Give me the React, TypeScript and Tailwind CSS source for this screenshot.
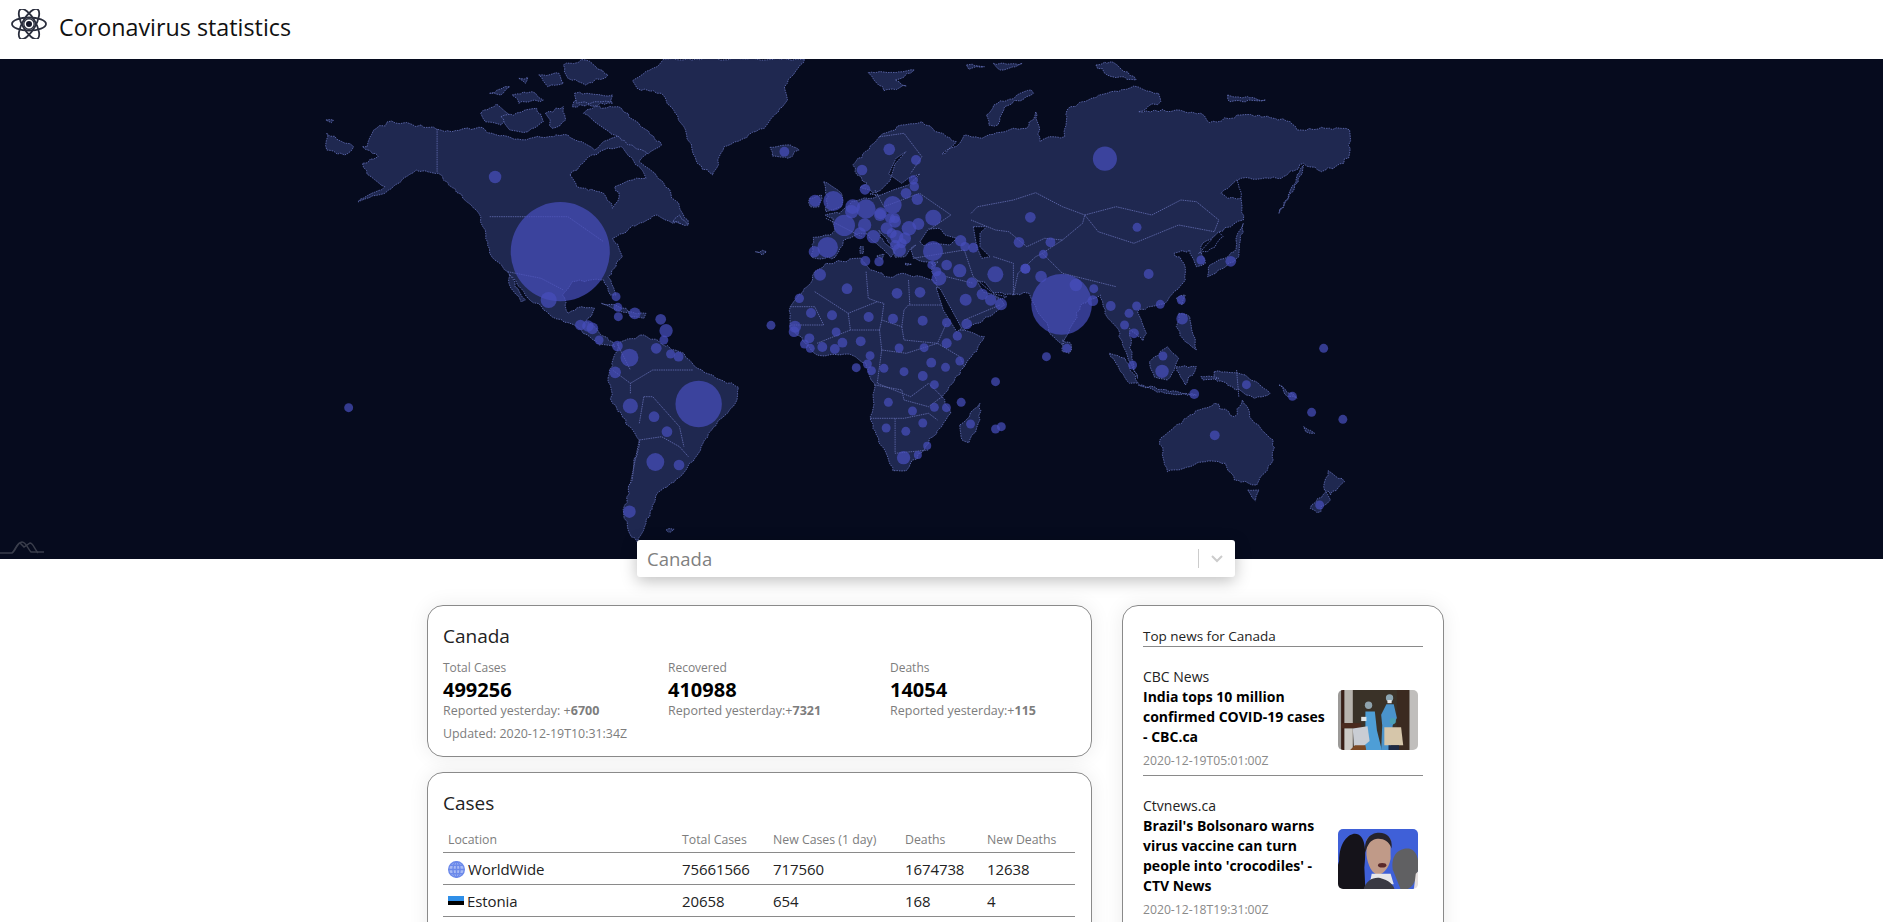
import React from 'react';

type Pt = [number, number];

// map shapes are noted in the crops they were read from, each with its own origin and scale
const west = (p: Pt): Pt => [300 + p[0] / 2.24, 50 + p[1] / 3];
const east = (p: Pt): Pt => [750 + p[0] / 2.24, 50 + p[1] / 3];
const mid = (p: Pt): Pt => [780 + p[0] / 3, 150 + p[1] / 3];
const str = (pts: Pt[]) => pts.map((p) => p[0].toFixed(1) + ',' + p[1].toFixed(1)).join(' ');

// breaks long straight edges up so coasts read as coasts
const rough = (pts: Pt[]): Pt[] => {
  const out: Pt[] = [];
  pts.forEach((a, i) => {
    const b = pts[(i + 1) % pts.length];
    const len = Math.hypot(b[0] - a[0], b[1] - a[1]);
    const steps = Math.max(1, Math.round(len / 4));
    for (let s = 0; s < steps; s++) {
      const t = s / steps;
      const n1 = Math.sin((a[0] + s) * 12.9898 + (a[1] + s) * 78.233) * 43758.5453;
      const n2 = Math.sin((a[0] + s) * 39.346 + (a[1] - s) * 11.135) * 24634.6345;
      const jx = s === 0 ? 0 : (n1 - Math.floor(n1) - 0.5) * 2.8;
      const jy = s === 0 ? 0 : (n2 - Math.floor(n2) - 0.5) * 2.8;
      out.push([a[0] + (b[0] - a[0]) * t + jx, a[1] + (b[1] - a[1]) * t + jy]);
    }
  });
  return out;
};

const westLand: Pt[][] = [
  // north america
  [[150,290],[165,240],[205,213],[305,237],[340,245],[400,232],[430,250],[480,268],[540,262],[600,255],[640,282],[660,300],[690,270],[730,255],[790,295],[760,335],[790,365],[815,400],[850,470],[870,522],[835,520],[800,495],[760,520],[700,565],[722,620],[690,680],[708,735],[695,735],[680,690],[610,695],[588,735],[600,790],[630,770],[660,775],[640,815],[700,875],[705,890],[670,885],[620,830],[560,795],[505,735],[465,665],[425,610],[415,540],[395,480],[365,445],[310,370],[260,360],[190,430],[130,456],[190,410],[150,372],[140,340],[175,320],[140,290]],
  // south america
  [[690,985],[712,880],[770,855],[850,905],[890,955],[982,1012],[975,1060],[915,1150],[890,1215],[850,1282],[800,1330],[772,1430],[755,1475],[735,1440],[725,1390],[740,1300],[760,1170],[700,1060]],
  // greenland
  [[745,92],[800,50],[815,27],[1130,27],[1085,110],[1092,150],[1040,235],[950,290],[925,375],[890,340],[860,230],[810,130],[755,115]],
  // arctic islands
  [[635,190],[660,170],[720,175],[810,285],[780,312],[720,270],[660,215]],
  [[405,190],[440,162],[470,195],[450,225],[415,215]],
  [[450,200],[530,175],[545,215],[510,245],[470,240]],
  [[550,190],[590,170],[595,210],[565,235]],
  [[610,170],[700,160],[695,150],[620,135]],
  [[425,130],[470,110],[450,135]],
  [[475,135],[520,125],[545,150],[490,160]],
  [[535,75],[580,70],[590,100],[555,110]],
  [[590,45],[640,30],[690,75],[640,105],[600,85]],
  [[615,130],[700,135],[695,155],[620,160]],
  [[490,85],[510,82],[505,100]],
  [[60,250],[120,290],[100,315],[60,300]],
  [[58,210],[75,210],[70,218]],
  // baja
  [[470,675],[505,750],[495,755],[468,700]],
  // caribbean
  [[675,760],[730,775],[745,790],[700,775]],
  [[735,785],[775,790],[770,805],[740,800]],
  [[835,515],[870,525],[850,495]],
  [[1020,605],[1045,605],[1035,615]],
  [[820,1440],[838,1438],[825,1446]],
];

const europeCoast: Pt[] = [
  [470,395],[455,365],[458,340],[430,335],[400,322],[392,300],[408,285],[375,320],[345,322],[335,285],[305,252],[296,240],[300,262],[322,285],[346,302],[332,322],[300,290],[262,252],[235,250],[190,272],[165,322],[120,327],[95,322],[100,262],[150,255],[165,240],[160,205],[135,195],[180,190],[215,155],[290,140],[270,120],[240,112],[262,100],
];
const midToEast = (p: Pt): Pt => [67.2 + 0.7467 * p[0], 300 + p[1]];

const eastLand: Pt[][] = [
  // eurasia, seas cut out below
  [[290,260],[340,225],[385,215],[440,260],[462,275],[430,312],[470,280],[480,255],[520,265],[580,240],[620,235],[640,185],[650,275],[670,260],[705,260],[710,180],[745,155],[800,130],[860,108],[915,130],[920,155],[870,185],[960,180],[1010,190],[1030,218],[1100,195],[1140,195],[1210,215],[1225,240],[1280,232],[1343,240],[1343,310],[1330,340],[1280,365],[1240,340],[1190,385],[1100,385],[1060,430],[1100,445],[1105,510],[1050,545],[1010,590],[1020,640],[1000,650],[985,600],[950,610],[972,640],[975,690],[930,760],[890,772],[868,785],[888,850],[880,872],[850,835],[855,925],[868,985],[845,915],[820,830],[795,790],[785,735],[745,760],[700,885],[680,860],[635,760],[625,730],[590,735],[565,728],[540,725],[570,765],[535,800],[475,845],[440,780],[415,700],
    ...europeCoast.map(midToEast),
    [240,375],[230,345]],
  // africa
  [[145,665],[170,640],[250,625],[270,660],[320,682],[340,670],[410,690],[470,840],[525,860],[480,950],[430,1040],[450,1090],[410,1160],[350,1262],[320,1262],[270,1110],[280,1010],[260,940],[220,912],[150,915],[90,830],[90,770],[140,690]],
  // australia, tasmania, nz
  [[918,1170],[985,1095],[1040,1060],[1085,1100],[1103,1050],[1125,1110],[1172,1170],[1172,1230],[1135,1305],[1085,1290],[1065,1240],[1020,1235],[935,1265]],
  [[1115,1320],[1140,1320],[1132,1352]],
  [[1295,1262],[1332,1295],[1300,1335],[1285,1310]],
  [[1290,1325],[1300,1350],[1270,1388],[1255,1375]],
  // islands
  [[45,292],[80,285],[110,300],[85,325],[50,318]],
  [[165,395],[205,430],[205,470],[170,485],[175,440]],
  [[133,445],[160,435],[155,470],[135,470]],
  [[265,68],[368,60],[325,90],[350,108],[300,122]],
  [[485,45],[525,50],[490,58]],
  [[545,40],[610,40],[560,60]],
  [[530,195],[555,160],[630,120],[635,130],[570,170],[555,225],[535,225]],
  [[775,45],[810,35],[865,90],[800,75]],
  [[1070,135],[1155,150],[1110,155],[1075,155]],
  [[1185,490],[1240,345],[1235,375],[1195,470]],
  [[1090,560],[1105,520],[1095,620],[1060,655],[1025,680],[1030,645],[1085,605]],
  [[470,1125],[515,1060],[515,1110],[490,1178],[475,1170]],
  [[700,870],[720,885],[715,910],[700,905]],
  [[805,910],[840,925],[870,1000],[850,1000]],
  [[895,935],[935,890],[960,925],[935,990],[905,980]],
  [[870,1005],[940,1025],[1000,1035],[930,1030]],
  [[955,950],[1000,950],[975,1005]],
  [[1040,965],[1110,975],[1165,1030],[1130,1045],[1080,1010],[1040,985]],
  [[960,790],[985,800],[1000,900],[975,875],[955,830]],
  [[1185,1005],[1225,1045],[1205,1040]],
  [[1240,1130],[1265,1150],[1245,1145]],
  [[955,745],[975,735],[968,765]],
  [[1010,980],[1050,985],[1015,990]],
];

// painted over the land polygons
const midSeas: Pt[][] = [
  [[270,132],[300,122],[330,92],[345,42],[378,5],[348,25],[326,72],[365,100],[385,85],[420,72],[385,105],[345,118],[300,136]],
  [[420,275],[445,237],[480,235],[495,255],[530,265],[510,285],[460,280],[430,287]],
  [[580,230],[620,230],[600,250],[600,290],[630,320],[605,325],[590,290]],
  [[590,392],[615,397],[642,432],[680,440],[665,447],[635,432],[610,426]],
  [[468,412],[480,415],[545,535],[530,545],[490,480]],
];
const midIslands: Pt[][] = [
  [[240,290],[250,290],[250,310],[240,310]],
  [[290,318],[312,312],[306,328]],
  [[455,340],[475,335],[462,348]],
  [[375,340],[395,343],[378,346]],
];

const eastSeas: Pt[][] = [
  [[1055,430],[1090,390],[1100,445],[1070,445]],
  [[1005,610],[1050,545],[1060,560],[1025,605]],
];

const westLines: Pt[][] = [
  [[307,237],[307,365]],
  [[425,500],[600,500],[680,575]],
  [[465,665],[540,685],[590,720]],
  [[740,1000],[790,960],[880,960]],
  [[740,1030],[740,1000],[700,960]],
  [[770,1040],[790,1040],[850,1130],[860,1190]],
  [[760,1120],[770,1040]],
  [[760,1170],[810,1160],[850,1190],[870,1220]],
  [[740,1300],[760,1170]],
  [[710,880],[740,960]],
];

const eastLines: Pt[][] = [
  [[495,490],[510,470],[590,450],[640,428],[700,470],[750,495],[745,520],[700,570],[660,565],[620,590],[580,545],[550,540],[495,510]],
  [[750,495],[820,470],[900,495],[965,450],[1000,455],[1050,510],[1040,545],[960,525],[860,580],[780,545],[750,495]],
  [[700,570],[655,610],[700,670],[820,710]],
  [[590,735],[600,670],[640,620],[655,610]],
  [[545,620],[590,640],[590,735]],
  [[480,600],[500,680],[540,725]],
  [[365,625],[480,600]],
  [[440,680],[500,700]],
  [[480,810],[560,765]],
  [[145,725],[220,790],[285,755],[300,760],[295,810],[340,830],[345,780],[355,765],[430,765]],
  [[355,690],[358,765]],
  [[260,665],[265,745],[285,755]],
  [[90,770],[145,770],[165,825],[90,825]],
  [[220,790],[225,840],[290,840],[295,810]],
  [[340,830],[345,870],[420,880],[440,820]],
  [[290,840],[295,900],[350,910],[420,880],[470,920],[480,950]],
  [[295,900],[285,1000],[360,1040],[400,1000],[430,1040]],
  [[280,1005],[340,1020],[345,1050],[400,1070],[430,1040]],
  [[270,1105],[345,1105],[400,1090],[420,1110]],
  [[325,1105],[325,1210],[400,1200]],
  [[150,880],[225,840]],
  [[280,420],[300,470],[380,430],[450,495],[400,540]],
  [[170,505],[250,560]],
  [[290,260],[345,250],[385,320],[360,370]],
  [[1090,960],[1095,1040]],
];

// [x, y, r] in crop space
const westDots: number[][] = [
  [583,605,111],[437,381,14],[557,750,18],[893,1062,52],[738,923,20],[796,1236,20],[740,1068,17],[738,1385,14],[793,1100,12],[822,1145,12],[849,1245,12],[706,967,13],[798,895,12],[830,912,10],[848,920,11],[711,888,12],[670,870,10],[655,835,13],[628,825,12],[645,828,13],[712,772,10],[713,800,10],[708,740,10],[750,790,13],[808,808,12],[820,842,15],[815,870,10],[109,1073,10],
];

const eastDots: number[][] = [
  [77,305,11],[47,826,10],[795,326,27],[698,763,68],[867,532,10],[893,672,11],[617,656,11],[673,577,11],[657,613,10],[652,680,13],[730,705,14],[770,716,10],[768,752,12],[312,298,13],[122,882,10],[135,895,10],[133,865,11],[162,891,11],[190,897,11],[207,878,11],[193,846,10],[248,874,11],[269,917,10],[263,942,10],[272,962,10],[238,953,10],[300,955,10],[334,894,10],[390,893,10],[470,933,10],[406,938,11],[438,952,10],[345,965,10],[387,978,11],[413,1004,10],[310,1057,10],[364,1083,10],[413,1072,10],[440,1073,10],[305,1134,10],[349,1144,10],[387,1119,10],[344,1223,15],[376,1215,9],[397,1187,9],[494,1122,10],[473,1057,10],[550,1137,10],[563,1130,10],[550,995,10],[664,920,10],[710,895,10],[808,768,11],[839,825,10],[849,790,10],[866,768,10],[925,918,10],[923,964,15],[857,945,10],[968,806,13],[966,750,10],[919,763,10],[860,850,11],[1010,630,10],[1077,634,12],[1112,1004,10],[995,1032,11],[1215,1039,10],[1258,1087,10],[1328,1108,10],[1041,1156,11],[1276,1365,10],[1285,895,10],
];

const midDots: number[][] = [
  [160,153,30],[105,152,18],[218,170,22],[215,185,20],[258,177,29],[338,165,27],[193,226,32],[254,225,20],[280,260,20],[240,250,18],[300,195,18],[302,190,18],[330,205,15],[345,215,18],[345,205,15],[387,235,22],[415,222,18],[460,203,24],[412,148,17],[378,130,16],[400,90,14],[403,110,14],[255,118,16],[143,292,31],[103,305,17],[320,235,18],[350,260,20],[335,250,15],[345,285,15],[365,280,15],[375,265,18],[358,300,20],[459,303,30],[542,272,17],[555,290,14],[580,293,15],[297,335,14],[256,333,15],[500,345,16],[477,385,22],[470,365,14],[455,345,13],[539,362,20],[646,373,24],[575,398,16],[607,433,17],[632,450,17],[663,463,18],[557,449,18],[560,522,16],[420,427,16],[351,430,16],[201,416,16],[120,374,18],[58,445,14],[93,489,15],[156,496,15],[266,501,15],[339,506,15],[428,512,15],[500,518,14],[532,558,14],[500,580,15],[45,530,18],[42,545,16],[246,60,16],[408,30,15],[736,356,15],[717,277,16],[751,202,16],
];

const WorldMap = () => (
  <svg viewBox="0 59 1883 500" className="block w-full h-full">
    <g fill="#1f2850" stroke="#5f6bb0" strokeWidth="0.9" strokeDasharray="1.5 1">
      {westLand.map((s, i) => <polygon key={i} points={str(rough(s.map(west)))} />)}
      {eastLand.map((s, i) => <polygon key={i} points={str(rough(s.map(east)))} />)}
      {midIslands.map((s, i) => <polygon key={i} points={str(s.map(mid))} />)}
    </g>
    <g fill="#060b1e" stroke="#5f6bb0" strokeWidth="0.9" strokeDasharray="1.5 1">
      {midSeas.map((s, i) => <polygon key={i} points={str(s.map(mid))} />)}
      {eastSeas.map((s, i) => <polygon key={i} points={str(rough(s.map(east)))} />)}
      <polygon points={str(rough(([[605,375],[640,330],[680,300],[720,290],[760,350],[775,385],[745,390],[705,410],[715,440],[700,475],[680,430],[620,410]] as Pt[]).map(west)))} />
    </g>
    <g fill="none" stroke="#5c67a8" strokeWidth="0.9" strokeDasharray="1.5 0.8">
      {westLines.map((s, i) => <polyline key={i} points={str(s.map(west))} />)}
      {eastLines.map((s, i) => <polyline key={i} points={str(s.map(east))} />)}
    </g>
    <g fill="#474dbb" fillOpacity="0.72">
      {westDots.map((d, i) => {
        const [x, y] = west([d[0], d[1]]);
        return <circle key={i} cx={x} cy={y} r={d[2] / 2.24} />;
      })}
      {eastDots.map((d, i) => {
        const [x, y] = east([d[0], d[1]]);
        return <circle key={i} cx={x} cy={y} r={d[2] / 2.24} />;
      })}
      {midDots.map((d, i) => {
        const [x, y] = mid([d[0], d[1]]);
        return <circle key={i} cx={x} cy={y} r={d[2] / 3} />;
      })}
    </g>
    <g fill="none" stroke="#3a3e4c" strokeWidth="1.4">
      <path d="M0 553 H12 C15 553 17 542 22 542 C26 542 28 549 31 552 H44" />
      <path d="M12 553 C15 550 17 543 20 543 L24 547 L30 543 C33 543 34 548 38 553" />
    </g>
  </svg>
);

const ReactLogo = () => (
  <svg width="36" height="30" viewBox="-18 -15 36 30" fill="none" stroke="#2a2e3d" strokeWidth="1.8" className="shrink-0">
    <ellipse rx="17" ry="6.5" />
    <ellipse rx="17" ry="6.5" transform="rotate(60)" />
    <ellipse rx="17" ry="6.5" transform="rotate(120)" />
    <circle r="5.2" strokeWidth="1.4" fill="#fff" />
    <circle r="3" stroke="none" fill="#15182a" />
  </svg>
);

const GlobeIcon = () => (
  <svg width="17" height="17" viewBox="0 0 24 24" fill="#a9bbf5" stroke="#6b89ea" strokeWidth="2">
    <circle cx="12" cy="12" r="11" />
    <ellipse cx="12" cy="12" rx="5" ry="11" fill="none" />
    <path d="M1 12h22M3 6h18M3 18h18M12 1v22" fill="none" />
  </svg>
);

const Photo1 = () => (
  <svg viewBox="0 0 80 60" className="block w-full h-full blur-[0.5px] scale-105">
    <rect width="80" height="60" fill="#3a3228" />
    <rect width="5" height="60" fill="#9c9a98" />
    <rect x="5" width="3" height="60" fill="#3a1f17" />
    <rect x="8" width="8" height="33" fill="#b8b4ae" />
    <rect x="5" y="33" width="19" height="5" fill="#4a2a1e" />
    <rect x="8" y="38" width="8" height="22" fill="#cccac6" />
    <rect x="58" width="12" height="60" fill="#3b2a20" />
    <rect x="70" width="10" height="60" fill="#c0bebc" />
    <path d="M28 22 L37 22 L39 40 L44 60 L25 60 L28 38Z" fill="#4e9ed6" />
    <circle cx="31" cy="16" r="3.5" fill="#8fa3ad" />
    <rect x="24" y="27" width="5" height="4" fill="#e0e4e6" />
    <path d="M43 25 L48 15 L55 15 L58 28 L54 35 L52 60 L43 60 L44 35Z" fill="#4a93cb" />
    <circle cx="51" cy="9" r="3.5" fill="#8ba6b3" />
    <rect x="49" y="11" width="4" height="3" fill="#e8e8e8" />
    <path d="M16 38 L30 36 L32 50 L26 55 L17 55Z" fill="#c9cdd4" />
    <path d="M12 60 L18 54 L28 54 L29 60Z" fill="#7c4a26" />
    <path d="M46 37 L62 37 L64 54 L46 54Z" fill="#d6c6aa" />
    <path d="M50 54 L60 54 L60 60 L50 60Z" fill="#1e2a44" />
    <circle cx="54" cy="31" r="3" fill="#4aa0b5" />
  </svg>
);

const Photo2 = () => (
  <svg viewBox="0 0 80 60" className="block w-full h-full blur-[0.5px] scale-105">
    <rect width="80" height="60" fill="#3f60d8" />
    <path d="M3 32 C3 14 12 6 18 6 C28 6 29 22 27 38 L28 60 L0 60 L0 42Z" fill="#15131a" />
    <path d="M29 12 C34 4 48 4 52 12 L52 30 C50 40 44 45 40 45 C35 45 30 36 29 26Z" fill="#c09a88" />
    <path d="M28 24 C26 10 34 5 41 5 C49 5 54 10 53 20 C50 12 44 10 38 11 C33 12 30 16 28 24Z" fill="#26232c" />
    <ellipse cx="44" cy="36" rx="4" ry="2.2" fill="#5a2a2a" />
    <path d="M34 44 L52 44 L55 54 L32 54Z" fill="#e6e6ea" />
    <path d="M26 60 C28 50 36 47 42 48 C50 50 55 54 56 60Z" fill="#3a3a44" />
    <path d="M54 40 C52 26 60 20 68 20 C76 20 80 30 78 42 C76 52 72 60 62 60Z" fill="#606062" />
    <path d="M74 60 L76 44 L80 40 L80 60Z" fill="#e4dede" />
  </svg>
);

const cols = 'grid grid-cols-[234px_91px_132px_82px_92px] border-b border-[#8a8a8a]';

const rowCell = 'pl-[5px] pt-[1px] text-[15px] leading-[30px] text-[#222] tracking-[-0.1px]';

const headCell = 'pl-[5px] pb-[2px] text-[12.3px] leading-[20px] text-[#7d7d7d]';

const StatBlock = ({ label, value, note, extra }: { label: string; value: string; note: string; extra: string }) => (
  <div>
    <div className="text-[12px] leading-[20px] text-[#7d7d7d]">{label}</div>
    <div className="text-[20px] leading-[24px] font-bold text-black">{value}</div>
    <div className="text-[12.5px] leading-[18px] text-[#7d7d7d]">
      {note}<span className="font-bold">{extra}</span>
    </div>
  </div>
);

const NewsItem = ({ source, title, date, photo }: { source: string; title: string; date: string; photo: React.ReactNode }) => (
  <div className="border-b border-[#8a8a8a] pt-[20px] pb-[4px] last:pb-[3px]">
    <div className="text-[14px] leading-[20px] text-[#222]">{source}</div>
    <div className="flex items-center justify-between pr-[5px]">
      <div className="w-[182px] text-[14px] leading-[20px] font-bold text-black">{title}</div>
      <div className="w-[80px] h-[60px] rounded-[5px] overflow-hidden shrink-0 translate-y-[3px]">{photo}</div>
    </div>
    <div className="mt-[4px] text-[12.2px] leading-[20px] text-[#8a8a8a]">{date}</div>
  </div>
);

const App = () => {
  return (
    <div className="h-[922px] overflow-hidden bg-white font-['Open_Sans',sans-serif]">
      <div className="h-[59px] flex items-start pt-[9px] pl-[11px]">
        <ReactLogo />
        <h1 className="ml-[12px] text-[23.3px] leading-[36px] text-[#111]">Coronavirus statistics</h1>
      </div>
      <div className="h-[500px] bg-[#060b1e]">
        <WorldMap />
      </div>
      <div className="relative -mt-[19px] w-[598px] h-[37px] ml-[637px] flex items-center bg-white rounded-[3px] shadow-[0_4px_16px_rgba(0,0,0,0.25)]">
        <span className="flex-1 pl-[10px] pt-[1px] text-[18.5px] text-[#808080]">Canada</span>
        <span className="w-px h-[19px] bg-[#ccc]"></span>
        <svg width="36" height="20" viewBox="0 0 36 20" fill="none" stroke="#ccc" strokeWidth="2">
          <path d="M13 7l5 5 5-5" />
        </svg>
      </div>
      <div className="mt-[28px] ml-[427px] flex items-start gap-[30px]">
        <div className="w-[665px] flex flex-col gap-[15px]">
          <div className="h-[152px] border border-[#8a8a8a] rounded-[16px] shadow-[0_0_20px_rgba(0,0,0,0.08)] px-[15px] pt-[15px]">
            <div className="text-[19px] leading-[30px] text-[#222]">Canada</div>
            <div className="mt-[7px] grid grid-cols-[225px_222px_1fr]">
              <StatBlock label="Total Cases" value="499256" note="Reported yesterday: +" extra="6700" />
              <StatBlock label="Recovered" value="410988" note="Reported yesterday:+" extra="7321" />
              <StatBlock label="Deaths" value="14054" note="Reported yesterday:+" extra="115" />
            </div>
            <div className="mt-[5px] text-[12.4px] leading-[18px] text-[#7d7d7d]">Updated: 2020-12-19T10:31:34Z</div>
          </div>
          <div className="h-[300px] border border-[#8a8a8a] rounded-[16px] shadow-[0_0_20px_rgba(0,0,0,0.08)] px-[15px] pt-[15px]">
            <div className="text-[19px] leading-[30px] text-[#222]">Cases</div>
            <div className="mt-[12px] w-[632px]">
              <div className={cols}>
                <div className={headCell}>Location</div>
                <div className={headCell}>Total Cases</div>
                <div className={headCell}>New Cases (1 day)</div>
                <div className={headCell}>Deaths</div>
                <div className={headCell}>New Deaths</div>
              </div>
              <div className={cols}>
                <div className={`${rowCell} flex items-center gap-[3px]`}><GlobeIcon />WorldWide</div>
                <div className={rowCell}>75661566</div>
                <div className={rowCell}>717560</div>
                <div className={rowCell}>1674738</div>
                <div className={rowCell}>12638</div>
              </div>
              <div className={cols}>
                <div className={`${rowCell} flex items-center gap-[3px]`}>
                  <span className="w-[16px] h-[14px] flex flex-col self-start mt-[10px]">
                    <span className="h-[5px] bg-[#2f8fe8]"></span>
                    <span className="h-[4px] bg-black"></span>
                    <span className="h-[5px] bg-white"></span>
                  </span>
                  Estonia
                </div>
                <div className={rowCell}>20658</div>
                <div className={rowCell}>654</div>
                <div className={rowCell}>168</div>
                <div className={rowCell}>4</div>
              </div>
            </div>
          </div>
        </div>
        <div className="w-[322px] h-[400px] border border-[#8a8a8a] rounded-[16px] shadow-[0_0_20px_rgba(0,0,0,0.08)] px-[20px] pt-[20px]">
          <div className="border-b border-[#8a8a8a] text-[13.5px] leading-[20px] text-[#222]">Top news for Canada</div>
          <NewsItem source="CBC News" title="India tops 10 million confirmed COVID-19 cases - CBC.ca" date="2020-12-19T05:01:00Z" photo={<Photo1 />} />
          <NewsItem source="Ctvnews.ca" title="Brazil's Bolsonaro warns virus vaccine can turn people into 'crocodiles' - CTV News" date="2020-12-18T19:31:00Z" photo={<Photo2 />} />
        </div>
      </div>
    </div>
  );
};

export default App;
